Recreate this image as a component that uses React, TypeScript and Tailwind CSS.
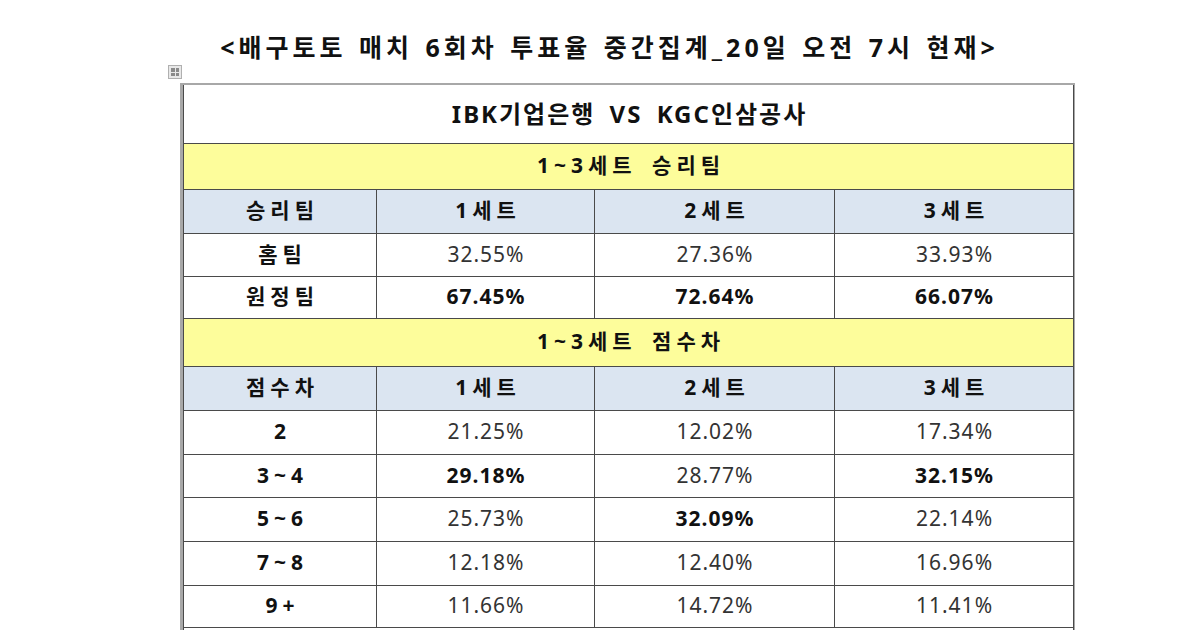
const font = "font-['Noto_Sans','Noto_Sans_CJK_KR',sans-serif]";

type Cell = { v: string; b?: boolean };

const winRows: { label: string; h: string; cells: Cell[] }[] = [
  { label: "홈팀", h: "h-[43px]", cells: [{ v: "32.55%" }, { v: "27.36%" }, { v: "33.93%" }] },
  { label: "원정팀", h: "h-[42px]", cells: [{ v: "67.45%", b: true }, { v: "72.64%", b: true }, { v: "66.07%", b: true }] },
];

const diffRows: { label: string; h: string; cells: Cell[] }[] = [
  { label: "2", h: "h-[44px]", cells: [{ v: "21.25%" }, { v: "12.02%" }, { v: "17.34%" }] },
  { label: "3~4", h: "h-[43px]", cells: [{ v: "29.18%", b: true }, { v: "28.77%" }, { v: "32.15%", b: true }] },
  { label: "5~6", h: "h-[44px]", cells: [{ v: "25.73%" }, { v: "32.09%", b: true }, { v: "22.14%" }] },
  { label: "7~8", h: "h-[44px]", cells: [{ v: "12.18%" }, { v: "12.40%" }, { v: "16.96%" }] },
  { label: "9+", h: "h-[42px]", cells: [{ v: "11.66%" }, { v: "14.72%" }, { v: "11.41%" }] },
];

const td = "border border-[#4a4a4a] text-center align-middle p-0";
// bold Korean labels are set a bit wide, like the original Malgun Gothic
const label = "text-[21px] font-bold text-[#111] tracking-[5px] pl-[5px]";

function YellowRow({ text, h }: { text: string; h: string }) {
  return (
    <tr className={h}>
      <td
        colSpan={4}
        className={`${td} bg-[#fdfd9b] text-[21px] font-bold text-[#111] tracking-[5px] pl-[5px] [word-spacing:5px]`}
      >
        {text}
      </td>
    </tr>
  );
}

function HeadRow({ first }: { first: string }) {
  return (
    <tr className="h-[44px]">
      {[first, "1세트", "2세트", "3세트"].map((t) => (
        <td key={t} className={`${td} bg-[#dbe5f1] ${label}`}>
          {t}
        </td>
      ))}
    </tr>
  );
}

function DataRow({ label: name, h, cells }: { label: string; h: string; cells: Cell[] }) {
  return (
    <tr className={h}>
      <td className={`${td} ${label}`}>{name}</td>
      {cells.map((c, i) => (
        <td
          key={i}
          className={`${td} text-[21px] tracking-[1px] pl-[1px] ${c.b ? "font-bold text-[#111]" : "font-normal text-[#333]"}`}
        >
          {c.v}
        </td>
      ))}
    </tr>
  );
}

export default function App() {
  return (
    <div className={`w-[1200px] h-[630px] overflow-hidden bg-white ${font}`}>
      <h1 className="pt-[29px] h-[65px] leading-[36px] pl-[19px] text-center text-[25px] font-bold text-[#111] tracking-[4px] [word-spacing:2px] whitespace-nowrap">
        &lt;배구토토 매치 6회차 투표율 중간집계_20일 오전 7시 현재&gt;
      </h1>

      {/* table handle */}
      <div className="ml-[168px] w-[14px] h-[14px] border border-[#b0b0b0] bg-[#e8e8e8] grid grid-cols-2 grid-rows-2 gap-[1px] p-[2px]">
        <span className="bg-[#8a8a8a]" />
        <span className="bg-[#8a8a8a]" />
        <span className="bg-[#8a8a8a]" />
        <span className="bg-[#8a8a8a]" />
      </div>

      <div className="ml-[180px] mt-[4px] w-[895px] border-l-[3px] border-t-[2px] border-r-[2px] border-[#a8a8a8]">
        <table className="w-[890px] table-fixed border-collapse">
          <colgroup>
            <col className="w-[193px]" />
            <col className="w-[218px]" />
            <col className="w-[240px]" />
            <col className="w-[239px]" />
          </colgroup>
          <tbody>
            <tr className="h-[58px]">
              <td
                colSpan={4}
                className={`${td} border-t-0 text-[24px] font-bold text-[#111] tracking-[2px] pl-[2px] [word-spacing:6px]`}
              >
                IBK기업은행 VS KGC인삼공사
              </td>
            </tr>
            <YellowRow text="1~3세트 승리팀" h="h-[46px]" />
            <HeadRow first="승리팀" />
            {winRows.map((r) => (
              <DataRow key={r.label} {...r} />
            ))}
            <YellowRow text="1~3세트 점수차" h="h-[48px]" />
            <HeadRow first="점수차" />
            {diffRows.map((r) => (
              <DataRow key={r.label} {...r} />
            ))}
            <tr className="h-[44px]">
              <td colSpan={4} className={td} />
            </tr>
          </tbody>
        </table>
      </div>
    </div>
  );
}
